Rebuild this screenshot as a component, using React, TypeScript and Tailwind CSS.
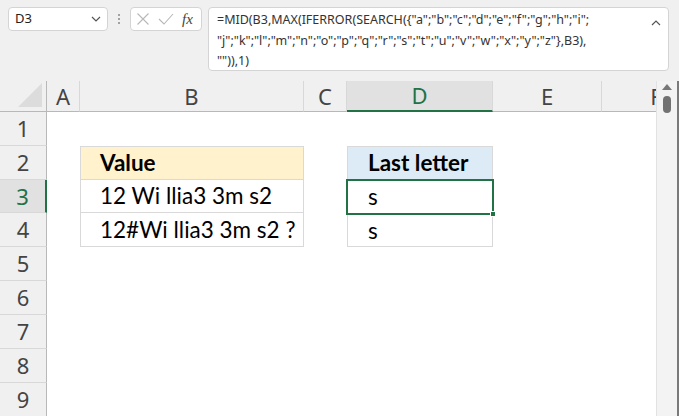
import React from 'react'

const UI_FONT = { fontFamily: '"Noto Sans", "Open Sans", sans-serif' }
const CELL_FONT = { fontFamily: 'Lato, "Liberation Sans", sans-serif' }

const COLS = ['A', 'B', 'C', 'D', 'E', 'F']
const ROWS = [1, 2, 3, 4, 5, 6, 7, 8, 9]

const FORMULA = [
  '=MID(B3,MAX(IFERROR(SEARCH({"a";"b";"c";"d";"e";"f";"g";"h";"i";',
  '"j";"k";"l";"m";"n";"o";"p";"q";"r";"s";"t";"u";"v";"w";"x";"y";"z"},B3),',
  '"")),1)',
]

function FormulaBar() {
  return (
    <div className="h-[81px] flex items-start pt-[7px] pl-[8px] shrink-0" style={UI_FONT}>
      {/* Name box */}
      <div className="w-[100px] h-[24px] bg-white border border-[#d4d4d4] rounded-[4px] flex items-center justify-between pl-[6px] pr-[6px]">
        <span className="text-[13px] text-[#222]">D3</span>
        <svg width="10" height="6" viewBox="0 0 10 6">
          <path d="M1 1l4 4 4-4" fill="none" stroke="#555" strokeWidth="1.2" />
        </svg>
      </div>
      {/* Dots */}
      <div className="w-[22px] h-[24px] flex flex-col items-center justify-center gap-[2px]">
        <span className="w-[2px] h-[2px] bg-[#888] rounded-full" />
        <span className="w-[2px] h-[2px] bg-[#888] rounded-full" />
        <span className="w-[2px] h-[2px] bg-[#888] rounded-full" />
      </div>
      {/* Cancel / Enter / fx */}
      <div className="w-[72px] h-[24px] bg-white border border-[#d4d4d4] rounded-[4px] flex items-center pl-[5px] gap-[8px]">
        <svg width="14" height="14" viewBox="0 0 14 14">
          <path d="M1.5 1.5l11 11M12.5 1.5l-11 11" stroke="#b8b8b8" strokeWidth="1.1" />
        </svg>
        <svg width="16" height="12" viewBox="0 0 16 12">
          <path d="M1 6l5 5L15 1" fill="none" stroke="#b8b8b8" strokeWidth="1.1" />
        </svg>
        <span className="text-[15px] italic text-[#444] leading-none" style={{ fontFamily: '"Liberation Serif", serif' }}>
          fx
        </span>
      </div>
      {/* Formula */}
      <div className="ml-[6px] w-[461px] h-[64px] bg-white border border-[#d4d4d4] rounded-[4px] pl-[8px] pt-[2px] relative">
        {FORMULA.map((line, i) => (
          <div key={i} className="text-[12.5px] leading-[20.5px] text-[#333] whitespace-nowrap">
            {line}
          </div>
        ))}
        <svg width="10" height="6" viewBox="0 0 10 6" className="absolute right-[7px] top-[12px]">
          <path d="M1 5l4-4 4 4" fill="none" stroke="#555" strokeWidth="1.2" />
        </svg>
      </div>
    </div>
  )
}

function ColHeader({ label }: { label: string }) {
  const selected = label === 'D'
  return (
    <div
      className={`flex items-center justify-center border-r border-[#d8d8d8] border-b ${
        selected ? 'bg-[#e1e1e1] text-[#217346] border-b-2 border-b-[#217346]' : 'bg-[#f0f0f0] text-[#444] border-b-[#b8b8b8]'
      } text-[22px] overflow-hidden`}
      style={UI_FONT}
    >
      {label}
    </div>
  )
}

function RowHeader({ n }: { n: number }) {
  const selected = n === 3
  return (
    <div
      className={`col-start-1 flex items-center justify-center border-b border-b-[#d8d8d8] ${
        selected ? 'bg-[#e1e1e1] text-[#217346] border-r-2 border-r-[#217346]' : 'bg-[#f0f0f0] text-[#444] border-r border-r-[#b8b8b8]'
      } text-[22px]`}
      style={UI_FONT}
    >
      {n}
    </div>
  )
}

export default function App() {
  return (
    <div className="w-[679px] h-[416px] bg-[#f0f0f0] flex flex-col overflow-hidden">
      <FormulaBar />
      <div className="flex-1 flex min-h-0">
        <div className="w-[656px] overflow-hidden">
          <div className="grid grid-cols-[47px_33px_224px_43px_146px_109px_109px] grid-rows-[31px_34px_34px_33px_34px_34px_34px_34px_34px_34px] w-[711px] bg-white">
            {/* corner */}
            <div className="bg-[#f0f0f0] border-r border-r-[#b8b8b8] border-b border-b-[#b8b8b8] flex items-end justify-end pr-[4px] pb-[4px]">
              <div className="w-0 h-0 border-l-[24px] border-l-transparent border-b-[24px] border-b-[#dcdcdc]" />
            </div>
            {COLS.map((c) => (
              <ColHeader key={c} label={c} />
            ))}

            {ROWS.map((n) => (
              <React.Fragment key={n}>
                <RowHeader n={n} />
                {n === 2 && (
                  <>
                    <div className="col-start-3 row-start-3 row-span-3 border border-[#d9d9d9] flex flex-col text-[22.5px] text-black" style={CELL_FONT}>
                      <div className="h-[33px] bg-[#fff2cc] border-b border-[#d9d9d9] pl-[19px] flex items-center font-bold">Value</div>
                      <div className="h-[33px] border-b border-[#d9d9d9] pl-[19px] flex items-center">12 Wi llia3 3m s2</div>
                      <div className="flex-1 pl-[19px] flex items-center">12#Wi llia3 3m s2 ?</div>
                    </div>
                    <div className="col-start-5 row-start-3 row-span-3 border border-[#d9d9d9] flex flex-col text-[22.5px] text-black relative" style={CELL_FONT}>
                      <div className="h-[33px] bg-[#ddebf7] border-b border-[#d9d9d9] pl-[20px] flex items-center font-bold">Last letter</div>
                      <div className="h-[33px] pl-[20px] flex items-center">s</div>
                      <div className="flex-1 border-t border-[#d9d9d9] pl-[20px] flex items-center">s</div>
                      {/* active cell */}
                      <div className="absolute left-[-2px] right-[-2px] top-[32px] h-[36px] border-2 border-[#217346] pointer-events-none" />
                      <div className="absolute right-[-4px] top-[64px] w-[6px] h-[6px] bg-[#217346] border border-white" />
                    </div>
                  </>
                )}
              </React.Fragment>
            ))}
          </div>
        </div>
        {/* vertical scrollbar */}
        <div className="flex-1 bg-[#f3f3f3] border-l border-[#e2e2e2] border-r-2 border-r-[#7a7a7a] flex flex-col items-center pt-[3px]">
          <div className="w-0 h-0 border-l-[5px] border-l-transparent border-r-[5px] border-r-transparent border-b-[6px] border-b-[#777]" />
          <div className="mt-[6px] w-[8px] h-[17px] rounded-full bg-[#727272]" />
        </div>
      </div>
    </div>
  )
}
